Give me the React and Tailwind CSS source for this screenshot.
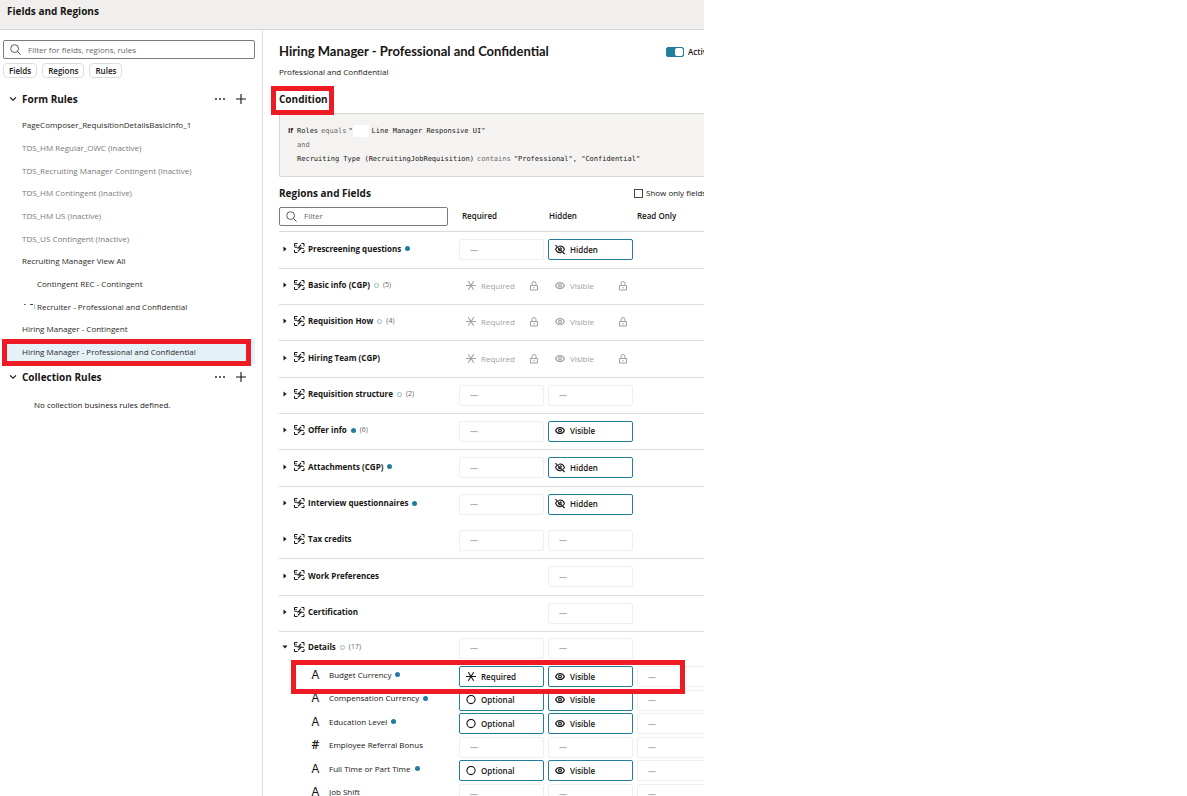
const RULES = [
  { name: "PageComposer_RequisitionDetailsBasicInfo_1" },
  { name: "TDS_HM Regular_OWC (Inactive)", inactive: true },
  { name: "TDS_Recruiting Manager Contingent (Inactive)", inactive: true },
  { name: "TDS_HM Contingent (Inactive)", inactive: true },
  { name: "TDS_HM US (Inactive)", inactive: true },
  { name: "TDS_US Contingent (Inactive)", inactive: true },
  { name: "Recruiting Manager View All" },
  { name: "Contingent REC - Contingent", indent: true },
  { name: "Recruiter - Professional and Confidential", indent: true, mark: true },
  { name: "Hiring Manager - Contingent" },
  { name: "Hiring Manager - Professional and Confidential", selected: true },
];

const REGIONS = [
  { name: "Prescreening questions", dot: "full", required: "none", hidden: "hidden" },
  { name: "Basic info (CGP)", dot: "empty", count: 5, required: "lockedRequired", hidden: "lockedVisible" },
  { name: "Requisition How", dot: "empty", count: 4, required: "lockedRequired", hidden: "lockedVisible" },
  { name: "Hiring Team (CGP)", required: "lockedRequired", hidden: "lockedVisible" },
  { name: "Requisition structure", dot: "empty", count: 2, required: "none", hidden: "none" },
  { name: "Offer info", dot: "full", count: 6, required: "none", hidden: "visible" },
  { name: "Attachments (CGP)", dot: "full", required: "none", hidden: "hidden" },
  { name: "Interview questionnaires", dot: "full", required: "none", hidden: "hidden", noLine: true },
  { name: "Tax credits", required: "none", hidden: "none" },
  { name: "Work Preferences", hidden: "none" },
  { name: "Certification", hidden: "none" },
];

const FIELDS = [
  { name: "Budget Currency", type: "A", dot: "full", required: "required", hidden: "visible", marked: true },
  { name: "Compensation Currency", type: "A", dot: "full", required: "optional", hidden: "visible" },
  { name: "Education Level", type: "A", dot: "full", required: "optional", hidden: "visible" },
  { name: "Employee Referral Bonus", type: "#", required: "none", hidden: "none" },
  { name: "Full Time or Part Time", type: "A", dot: "full", required: "optional", hidden: "visible" },
  { name: "Job Shift", type: "A", required: "none", hidden: "none" },
];

function SearchIcon() {
  return (
    <svg viewBox="0 0 11 11" className="size-[11px] shrink-0" fill="none" stroke="#4b4845" aria-hidden="true">
      <circle cx="4.6" cy="4.6" r="3.9" strokeWidth="0.9" />
      <path d="M7.4 7.4 10.5 10.5" strokeWidth="1" />
    </svg>
  );
}

function ChevronIcon() {
  return (
    <svg viewBox="0 0 8 8" className="size-2" fill="none" stroke="#161513" strokeWidth="1.1" aria-hidden="true">
      <path d="M1 2.4 4 5.2 7 2.4" />
    </svg>
  );
}

function RegionIcon() {
  return (
    <svg viewBox="0 0 11 11" className="size-[11px] shrink-0" fill="none" stroke="#161513" aria-hidden="true">
      <path d="M.5 3.500v-3H3.500M7.500 .5h2.500v3M.5 7v2.500H3.500M7.500 9.500h2.500V7" strokeWidth="1" />
      <path d="M.5 4.500h3M7.500 5.500h2.500M1 2.800h2" strokeWidth="0.8" />
      <path d="M7.100 1.800 4.100 5h3.200L3.900 8.400" strokeWidth="1.100" />
    </svg>
  );
}

function AsteriskIcon() {
  return (
    <svg viewBox="0 0 10 10" className="size-2.5" fill="none" stroke="currentColor" strokeWidth="1.100" aria-hidden="true">
      <path d="M0 4.500h10M2.300 .3 7.700 8.700M7.700 .3 2.300 8.700" />
    </svg>
  );
}

function CircleIcon() {
  return (
    <svg viewBox="0 0 10 10" className="size-2.5" fill="none" stroke="currentColor" strokeWidth="1.1" aria-hidden="true">
      <circle cx="5" cy="4.500" r="4.100" />
    </svg>
  );
}

function EyeIcon() {
  return (
    <svg viewBox="0 0 10 10" className="size-2.5" fill="none" stroke="currentColor" strokeWidth="1.100" aria-hidden="true">
      <path d="M.6 4.500C1.400 2.500 3 1.500 5 1.500S8.600 2.500 9.400 4.500C8.600 6.500 7 7.500 5 7.500S1.400 6.500 .6 4.500Z" />
      <circle cx="5" cy="4.500" r="1.400" />
    </svg>
  );
}

function EyeOffIcon() {
  return (
    <svg viewBox="0 0 10 10" className="size-2.5" fill="none" stroke="currentColor" strokeWidth="1.100" aria-hidden="true">
      <path d="M.4 .2 9.600 9M3.400 1.400C6 .5 8.400 1.600 9.400 4.400 9.100 5.200 8.700 5.800 8.200 6.300M6.600 7.400C4 8.200 1.600 7.100.6 4.400 .9 3.600 1.300 3 1.800 2.500" />
      <path d="M3.600 3.900C3.400 5.200 4.300 6.100 5.600 5.800M5 2.900C6 3 6.500 3.600 6.500 4.400" />
    </svg>
  );
}

function LockIcon() {
  return (
    <svg viewBox="0 0 10 10" className="size-2.5" fill="none" stroke="currentColor" strokeWidth="1" aria-hidden="true">
      <path d="M1.500 4.500h7v4.500h-7zM3 4.500V2.500a2 2 0 0 1 4 0v2M5 6v1.500" />
    </svg>
  );
}

const KINDS = {
  hidden: { icon: <EyeOffIcon />, label: "Hidden" },
  visible: { icon: <EyeIcon />, label: "Visible" },
  required: { icon: <AsteriskIcon />, label: "Required" },
  optional: { icon: <CircleIcon />, label: "Optional" },
  lockedRequired: { icon: <AsteriskIcon />, label: "Required", locked: true },
  lockedVisible: { icon: <EyeIcon />, label: "Visible", locked: true },
};

function Setting({ kind }) {
  if (!kind) return null;
  if (kind === "none") {
    return (
      <button type="button" className="flex h-[21px] w-[85px] items-center rounded-xs border border-[#f1efed] pl-2.5 text-[8px] font-bold text-[#b5b2af]">
        —
      </button>
    );
  }
  const { icon, label, locked } = KINDS[kind];
  if (locked) {
    return (
      <div className="flex h-[21px] w-[85px] items-center gap-[5px] pr-[5px] pl-[7px] text-[8px] text-[#a3a09d]">
        {icon}
        <span className="flex-1">{label}</span>
        <LockIcon />
      </div>
    );
  }
  return (
    <button type="button" className="flex h-[21px] w-[85px] items-center gap-[5px] rounded-xs border border-[#227e9e] bg-white pl-1.5 text-[8px] font-semibold text-[#161513]">
      {icon}
      {label}
    </button>
  );
}

function Dot({ kind }) {
  if (kind === "full") return <span className="size-[5px] rounded-full bg-[#227e9e]" />;
  if (kind === "empty") return <span className="size-[5px] rounded-full border border-[#8fb9c9]" />;
  return null;
}

function RegionName({ region, open }) {
  return (
    <div className="flex items-center pb-0.5">
      <button type="button" aria-label={"Toggle " + region.name} aria-expanded={!!open} className="mr-[3px] flex w-3 justify-center">
        <svg viewBox="0 0 6 6" className="size-1.5" fill="#161513" aria-hidden="true">
          {open ? <path d="M.5 1.500h5L3 4.500Z" /> : <path d="M1.500.5v5L4.500 3Z" />}
        </svg>
      </button>
      <RegionIcon />
      <span className="mr-1 ml-[3px] text-[8px] font-bold">{region.name}</span>
      <Dot kind={region.dot} />
      {region.count ? <span className="ml-1 text-[7px] text-[#6b6865]">({region.count})</span> : null}
    </div>
  );
}

function SidebarHeading({ id, children }) {
  return (
    <div className="flex h-5 items-center pr-4 pl-[9px]">
      <ChevronIcon />
      <h2 id={id} className="ml-[5px] flex-1 text-[10px] font-bold">{children}</h2>
      <button type="button" aria-label="More actions" className="mr-2.5">
        <svg viewBox="0 0 12 10" className="h-2.5 w-3" fill="#161513" aria-hidden="true">
          <circle cx="2" cy="5" r=".9" /><circle cx="6" cy="5" r=".9" /><circle cx="10" cy="5" r=".9" />
        </svg>
      </button>
      <button type="button" aria-label="Add rule">
        <svg viewBox="0 0 10 10" className="size-2.5" stroke="#161513" strokeWidth="1.100" aria-hidden="true">
          <path d="M5 0v10M0 5h10" />
        </svg>
      </button>
    </div>
  );
}

export default function App() {
  return (
    <div className="flex h-screen overflow-hidden bg-white font-['Open_Sans',sans-serif] text-[#161513]">
      <div className="flex w-full max-w-[704px] flex-col overflow-hidden">
        <header className="flex h-[30px] shrink-0 items-start border-b border-[#d8d6d3] bg-[#f0efed] pt-[3px] pl-[7px]">
          <h1 className="text-[10px] leading-4 font-bold">Fields and Regions</h1>
        </header>
        <div className="flex min-h-0 flex-1">
          <aside className="w-[263px] shrink-0 border-r border-[#e0dedb] pt-2.5">
            <label className="mr-[7px] ml-[3px] flex h-[19px] items-center gap-[7px] rounded-xs border border-[#7d7a77] pl-1.5">
              <SearchIcon />
              <input aria-label="Filter rules" placeholder="Filter for fields, regions, rules" className="min-w-0 flex-1 text-[8px] outline-none placeholder:text-[#6b6865]" />
            </label>
            <div className="mt-1 ml-[3px] flex gap-[5px]">
              {["Fields", "Regions", "Rules"].map((t) => (
                <button key={t} type="button" className="h-[15px] rounded border border-[#e0dedb] px-[5px] text-[8px] leading-3 font-semibold">{t}</button>
              ))}
            </div>
            <div className="mt-[11px]">
              <SidebarHeading id="form-rules">Form Rules</SidebarHeading>
            </div>
            <ul aria-labelledby="form-rules" className="mt-[5px] mr-[7px] ml-[7px] text-[8px]">
              {RULES.map((r) => (
                <li key={r.name} className="relative flex h-[23px] items-center nth-[3n+1]:h-[22px]">
                  <a
                    href="#rule"
                    className={
                      "flex h-full flex-1 items-center " +
                      (r.indent ? "pl-[30px] " : "pl-[15px] ") +
                      (r.inactive ? "text-[#7b7876] " : "text-[#2b2927] ") +
                      (r.selected ? "bg-[#e4f1f7]" : "")
                    }
                  >
                    {r.name}
                  </a>
                  {r.mark && (
                    <svg viewBox="0 0 12 8" className="absolute left-[17px] h-2 w-3" fill="none" strokeWidth="1" aria-hidden="true">
                      <path d="M0 1.500h1.500M6 1.500h3" stroke="#4b4845" />
                      <path d="M10.500 1v5" stroke="#8fd0f0" />
                    </svg>
                  )}
                  {r.selected && <span className="pointer-events-none absolute -top-px right-1 -bottom-[3px] -left-[5px] border-5 border-[#ed1c24]" />}
                </li>
              ))}
            </ul>
            <div className="mt-1">
              <SidebarHeading>Collection Rules</SidebarHeading>
            </div>
            <p className="mt-3 ml-[34px] text-[8px] leading-3">No collection business rules defined.</p>
          </aside>

          <main className="min-w-0 flex-1 overflow-hidden pt-3 pl-4">
            <div className="flex h-5 items-center justify-between">
              <h2 className="font-['Lato',sans-serif] text-[13px] font-bold whitespace-nowrap">Hiring Manager - Professional and Confidential</h2>
              <label className="flex w-[38px] shrink-0 items-center gap-1 text-[8px] font-semibold whitespace-nowrap">
                <input type="checkbox" role="switch" defaultChecked className="peer sr-only" />
                <span className="flex h-2.5 w-[18px] shrink-0 justify-end rounded-xs border border-[#227e9e] bg-[#227e9e]">
                  <span className="w-2 rounded-xs bg-white" />
                </span>
                Active
              </label>
            </div>
            <p className="mt-1 text-[8px] leading-3">Professional and Confidential</p>
            <div className="relative mt-[13px] flex h-4 items-center">
              <h3 className="relative text-[10px] font-bold">
                Condition
                <span className="pointer-events-none absolute -top-1.5 -right-1.5 -bottom-2 -left-2 border-5 border-[#ed1c24]" />
              </h3>
            </div>
            <div className="mt-1.5 h-16 rounded-l-xs border border-r-0 border-[#d8d6d3] bg-[#f4f3f1] py-2.5 pl-2 font-['DejaVu_Sans_Mono',monospace] text-[7px] leading-[14px] whitespace-nowrap">
              <p className="flex items-center">
                <b className="w-[9px] font-['Open_Sans',sans-serif]">If</b>
                <span>Roles</span>
                <span className="ml-[3px] text-[#6b6865]">equals</span>
                <span className="ml-0.5">"</span>
                <span className="h-3 w-4 bg-white" />
                <span className="ml-[3px]">Line Manager Responsive UI"</span>
              </p>
              <p className="pl-[9px] text-[#6b6865]">and</p>
              <p className="pl-[9px]">
                Recruiting Type (RecruitingJobRequisition)<span className="mx-[3px] text-[#6b6865]">contains</span>"Professional", "Confidential"
              </p>
            </div>

            <div className="mt-[7px] flex h-[18px] items-center justify-between">
              <h3 id="regions" className="text-[10px] font-bold">Regions and Fields</h3>
              <label className="flex w-[70px] shrink-0 items-center gap-[3px] text-[8px] whitespace-nowrap">
                <input type="checkbox" className="size-[9px] shrink-0 appearance-none border border-[#4b4845]" />
                Show only fields
              </label>
            </div>
            <table aria-labelledby="regions" className="w-full table-fixed border-collapse text-left">
              <thead>
                <tr className="h-[29px] border-b border-[#dcdad7] text-[8px]">
                  <th className="w-[180px] p-0 font-normal">
                    <label className="flex h-[19px] w-[169px] items-center gap-[7px] rounded-xs border border-[#7d7a77] pl-1.5">
                      <SearchIcon />
                      <input aria-label="Filter regions" placeholder="Filter" className="min-w-0 flex-1 text-[8px] outline-none placeholder:text-[#6b6865]" />
                    </label>
                  </th>
                  <th className="w-[89px] p-0 pl-[3px] font-semibold">Required</th>
                  <th className="w-[89px] p-0 pl-px font-semibold">Hidden</th>
                  <th className="p-0 font-semibold">Read Only</th>
                </tr>
              </thead>
              <tbody>
                {REGIONS.map((r) => (
                  <tr key={r.name} className={"h-9 border-b nth-[3n+1]:h-[37px] " + (r.noLine ? "border-transparent" : "border-[#e0dedb]")}>
                    <td className="p-0"><RegionName region={r} /></td>
                    <td className="p-0"><Setting kind={r.required} /></td>
                    <td className="p-0"><Setting kind={r.hidden} /></td>
                    <td className="p-0" />
                  </tr>
                ))}
              </tbody>
              <tbody>
                <tr className="h-[34px]">
                  <td className="p-0"><RegionName region={{ name: "Details", dot: "empty", count: 17 }} open /></td>
                  <td className="p-0"><Setting kind="none" /></td>
                  <td className="p-0"><Setting kind="none" /></td>
                  <td className="p-0" />
                </tr>
                {FIELDS.map((f) => (
                  <tr key={f.name} className="relative h-[23px] odd:h-6">
                    <td className="p-0">
                      <div className="flex items-center pb-1 pl-[31px] text-[8px]">
                        <span className={"mr-2 w-[11px] text-center leading-4 " + (f.type === "A" ? "font-['Inter',sans-serif] text-[12px] font-normal" : "text-[12px] font-semibold")}>{f.type}</span>
                        <span className="mr-1">{f.name}</span>
                        <Dot kind={f.dot} />
                      </div>
                      {f.marked && <span className="pointer-events-none absolute -top-[5px] right-[19px] -bottom-1.5 left-3 z-10 border-5 border-[#ed1c24]" />}
                    </td>
                    <td className="p-0"><Setting kind={f.required} /></td>
                    <td className="p-0"><Setting kind={f.hidden} /></td>
                    <td className="p-0"><Setting kind="none" /></td>
                  </tr>
                ))}
              </tbody>
            </table>
          </main>
        </div>
      </div>
    </div>
  );
}
